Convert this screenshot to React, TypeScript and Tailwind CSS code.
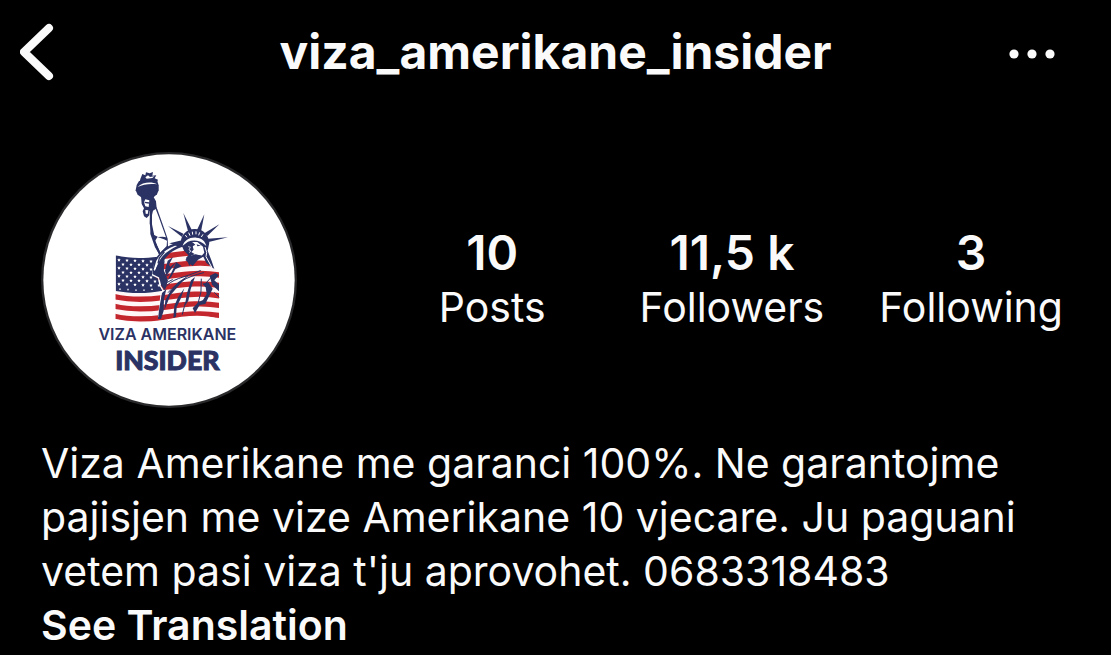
import React from 'react';

interface Stat {
  value: string;
  label: string;
}

const profile = {
  username: 'viza_amerikane_insider',
  bio: "Viza Amerikane me garanci 100%. Ne garantojme pajisjen me vize Amerikane 10 vjecare. Ju paguani vetem pasi viza t'ju aprovohet. 0683318483",
};

const stats: Stat[] = [
  { value: '10', label: 'Posts' },
  { value: '11,5 k', label: 'Followers' },
  { value: '3', label: 'Following' },
];

const NAVY = '#2b3264';
const RED = '#c4262e';

// stripe centre heights, bottom to top
const stripes = [529, 499, 470, 439, 408, 377, 346];

const starRows = [366, 378, 390, 402, 414, 426, 438];

const Logo: React.FC = () => (
  <svg viewBox="33 36 768 768" className="block h-full w-full" role="img" aria-label="Viza Amerikane Insider">
    <defs>
      <clipPath id="flag">
        <path d="M256 452 C300 462 345 463 398 450 L386 440 L370 405 L376 365 L402 340 L455 318 L480 345 L525 348 L540 378 L567 394 V537 C520 522 470 526 400 540 S300 548 256 537Z" />
      </clipPath>
      <clipPath id="canton">
        <path d="M257 346 C300 356 340 355 384 350 L370 378 L366 406 L384 416 L390 438 L398 452 C345 463 300 460 257 453Z" />
      </clipPath>
    </defs>

    <circle cx="417" cy="420" r="384" fill="#2a2a2c" />
    <circle cx="417" cy="420" r="377" fill="#fff" />

    {/* flag */}
    <g clipPath="url(#flag)">
      <rect x="250" y="320" width="330" height="230" fill="#fff7f7" />
      {stripes.map((y) => (
        <path key={y} d={`M250 ${y - 1} C300 ${y + 11} 345 ${y + 10} 400 ${y + 3} S510 ${y - 14} 572 ${y - 2}`} fill="none" stroke={RED} strokeWidth="16" />
      ))}
    </g>
    <g clipPath="url(#canton)">
      <rect x="250" y="340" width="150" height="120" fill={NAVY} />
      {starRows.map((y, row) =>
        Array.from({ length: 6 }, (_, i) => {
          const x = 267 + i * 24 + (row % 2) * 12;
          return (
            <path key={`${row}-${i}`} transform={`translate(${x} ${y - 6 + Math.round((x - 257) / 30)})`} d="M0 -5L1.6 -2 5 -2 2.6 1 3.4 4.6 0 2.8 -3.4 4.6 -2.6 1 -5 -2 -1.6 -2Z" fill="#fff" />
          );
        })
      )}
      <path d="M267 449l3-6 3 6z M291 451l3-6 3 6z M315 452l3-6 3 6z M339 452l3-6 3 6z M363 450l3-6 3 6z" fill="#fff" />
    </g>

    {/* torch */}
    <g fill={NAVY}>
      <path d="M331 117 L337 102 L346 106 L348 97 L359 100 L369 96 L367 107 L379 106 L374 115 L384 119 L380 128 L328 128Z" />
      <path d="M320 135 L327 123 L381 121 L386 136 L386 151 L381 163 L369 173 L337 174 L323 164 L317 151Z" />
      <path d="M333 168 L369 168 L378 184 L380 205 L366 206 L359 214 L358 226 L350 234 L342 229 L338 214 L342 205 L335 192Z" />
    </g>
    <path d="M346 112 L354 106 L360 111 L373 109 L367 114 L350 116Z" fill="#fff" />
    <path d="M323 141 C337 126 366 124 381 133 C361 130 339 133 323 141Z" fill="#fff" />
    <path d="M346 178 L358 181 L356 201 L346 199 L342 187Z M346 210 L355 211 L353 222 L347 221Z" fill="#fff" />
    <path d="M344 187 L357 189" stroke={NAVY} strokeWidth="4" />

    {/* raised arm */}
    <path d="M365 180 L376 196 L382 208 L400 259 L413 296 L414 321 L389 348 L377 320 L365 285 L359 250 L360 212Z" fill={NAVY} />
    <path d="M369 212 L377 207 L386 230 L408 292 L398 290 L382 291 L402 298 L411 302 L410 318 L391 338 L382 318 L376 302 L366 253 L366 225Z" fill="#fff" />
    <path d="M361 246 L371 284 L383 290 L375 303 L389 333 L390 347 L375 322 L361 282Z" fill={NAVY} />

    {/* sleeve and shoulder */}
    <path d="M370 375 C379 342 410 311 455 306 L468 317 C435 325 407 343 398 372 L405 410 L389 416 L367 407Z" fill={NAVY} />
    <path d="M379 362 C390 342 408 327 435 317 L443 317 C416 330 395 345 385 369 L375 393 L371 389Z" fill="#fff" />
    <path d="M384 370 L388 354 L403 336 M376 397 L383 379 L398 363" fill="none" stroke={NAVY} strokeWidth="4" />
    <path d="M366 404 L386 414 L390 436 L399 451 L393 466 L386 531" fill="none" stroke="#fff" strokeWidth="4" />

    {/* robe folds */}
    <g fill={NAVY}>
      <path d="M390 372 L404 361 L401 391 L414 421 L405 451 L394 438 L388 415Z" />
      <path d="M396 459 L409 447 L402 478 L401 512 L393 537 L384 537 L388 503Z" />
      <path d="M413 362 L429 351 L417 374 L421 380 L439 365 L422 389 L409 407 L405 392Z" />
      <path d="M429 388 L439 366 L455 379 L436 388 L423 412 L413 421Z" />
      <path d="M406 481 L421 453 L444 427 L478 404 L451 431 L421 466 L403 511Z" />
      <path d="M430 534 L433 498 L444 472 L463 445 L452 476 L440 501 L438 530Z" />
      <path d="M464 499 L471 460 L483 421 L495 411 L482 447 L475 482Z" />
      <path d="M495 519 L488 505 L505 487 L519 480 L530 462 L527 442 L517 431 L535 427 L548 446 L537 469 L526 492 L509 495Z" />
      <path d="M539 407 L556 399 L567 405 L553 421 L567 434 L567 454 L546 434Z" />
    </g>
    <g fill="none" stroke={NAVY} strokeWidth="3" strokeLinecap="round">
      <path d="M401 447 C427 413 456 416 511 392" />
      <path d="M415 457 C440 429 467 411 521 398" />
      <path d="M504 491 Q517 456 514 417" />
      <path d="M548 407 L528 429 M554 458 L567 471 M457 523 L466 488" />
      <path d="M406 430 L427 419 M411 377 L416 395 M398 414 L416 404" />
    </g>

    {/* crown */}
    <g fill={NAVY}>
      <path d="M414 258 L460 281 L456 291Z" />
      <path d="M460 219 L485 269 L474 274Z" />
      <path d="M523 223 L513 275 L501 270Z" />
      <path d="M568 253 L532 288 L523 280Z" />
      <path d="M594 292 L536 306 L533 296Z" />
      <path d="M418 310 L456 301 L461 314 L443 318Z" />
      <path d="M454 314 C448 290 467 268 493 267 C520 266 535 284 538 308 L533 332 L545 363 L553 387 L529 369 L520 350 L496 351 L478 378 L468 354 L476 345 L462 332Z" />
    </g>
    <path d="M466 285l5 7 M476 278l4 9 M487 275l1 9 M498 274v9 M509 277l-3 9 M519 283l-5 8" stroke="#fff" strokeWidth="3" />
    <path d="M458 317 C463 302 479 291 499 293 C516 294 525 303 529 318 C512 300 490 298 474 305Z" fill="#fff" />

    {/* face */}
    <path d="M486 306 L502 306 L519 320 L523 338 L515 347 L497 344 L485 347 L478 341 L482 332 L488 325Z" fill="#fff" />
    <path d="M472 309 L488 307 L496 314 L488 319 L491 329 L484 336 L495 343 L478 348 L467 337 L461 319Z M500 313 L513 317 L502 319Z" fill={NAVY} />
    <path d="M474 320 L481 321 L477 330 L483 333 L477 338" fill="none" stroke="#fff" strokeWidth="2" />
    <path d="M478 349 L497 343 L522 349 L504 359 L488 378 L466 360Z" fill={NAVY} />
    <path d="M525 321 L530 337 L528 350 L545 381" fill="none" stroke="#fff" strokeWidth="3" />

    <text x="412" y="601" textAnchor="middle" fill={NAVY} className="font-['Inter'] text-[48px] font-semibold">VIZA AMERIKANE</text>
    <text x="412" y="690" textAnchor="middle" fill={NAVY} stroke={NAVY} strokeWidth="3" className="font-['Lato'] text-[80px] font-black">INSIDER</text>
  </svg>
);

const App: React.FC = () => {
  return (
    <main className="min-h-screen bg-black font-['Inter',sans-serif] text-[#fafafa]">
      <header className="grid grid-cols-[1fr_auto_1fr] items-center px-5 pt-5">
        <button type="button" aria-label="Back" className="justify-self-start">
          <svg viewBox="0 0 34 64" className="block h-16 w-[34px]" fill="none" stroke="currentColor" strokeWidth="8" strokeLinecap="round" strokeLinejoin="round">
            <path d="M29 8 L4 32 L29 56" />
          </svg>
        </button>
        <h1 className="text-[48px] leading-[64px] font-bold">{profile.username}</h1>
        <button type="button" aria-label="More options" className="mt-1 mr-9 justify-self-end">
          <svg viewBox="0 0 46 10" className="block h-[10px] w-[46px]" fill="currentColor">
            <circle cx="5" cy="5" r="4.6" />
            <circle cx="23" cy="5" r="4.6" />
            <circle cx="41" cy="5" r="4.6" />
          </svg>
        </button>
      </header>

      <section className="mt-[68px] flex items-center justify-between pr-12 pl-[41px]">
        <div className="h-64 w-64 shrink-0">
          <Logo />
        </div>
        <ul className="flex text-center">
          {stats.map((stat, i) => (
            <li key={stat.label} className={i === 1 ? 'mr-[55px] ml-[94px]' : ''}>
              <div className="text-[48px] leading-[54px] font-semibold">{stat.value}</div>
              <div className="text-[41px] leading-[54px]">{stat.label}</div>
            </li>
          ))}
        </ul>
      </section>

      <section className="mt-7 px-[41px] text-[41px] leading-[54px]">
        <p>{profile.bio}</p>
        <button type="button" className="block font-semibold">See Translation</button>
      </section>
    </main>
  );
};

export default App;
